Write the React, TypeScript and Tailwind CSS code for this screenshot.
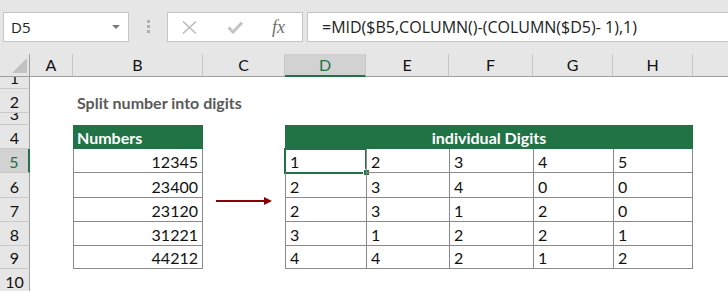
import React from "react";

const nums = ["12345", "23400", "23120", "31221", "44212"];

function FormulaBar() {
  return (
    <div className="h-[54px] bg-[#e6e6e6] pt-[12px] flex overflow-hidden font-['Open_Sans',sans-serif] text-[#222]">
      <div className="shrink-0 ml-[3px] w-[126px] h-[30px] bg-white border border-[#c6c6c6] flex items-center pl-[7px] pr-[8px] text-[15px]">
        <span className="flex-1">D5</span>
        <svg width="8" height="4" viewBox="0 0 8 4">
          <path d="M0 0H8L4 4Z" fill="#7a7a7a" />
        </svg>
      </div>
      <div className="shrink-0 w-[38px] flex flex-col items-center pt-[8px] gap-[2px]">
        <div className="w-[3px] h-[3px] bg-[#b0b0b0]" />
        <div className="w-[3px] h-[3px] bg-[#b0b0b0]" />
        <div className="w-[3px] h-[3px] bg-[#b0b0b0]" />
      </div>
      <div className="shrink-0 w-[136px] h-[30px] bg-white border border-[#c6c6c6] flex items-center">
        <svg className="ml-[14px]" width="15" height="13" viewBox="0 0 15 13">
          <path d="M1 0.5L14 12.5M14 0.5L1 12.5" stroke="#bdbdbd" strokeWidth="1.6" />
        </svg>
        <svg className="ml-[30px]" width="16" height="13" viewBox="0 0 16 13">
          <path d="M1.5 6.5L6 11L15 1.5" stroke="#c4c4c4" strokeWidth="3" fill="none" />
        </svg>
        <span className="ml-[29px] font-['Liberation_Serif',serif] italic text-[18px] text-[#6e6e6e] leading-none">
          fx
        </span>
      </div>
      <div className="shrink-0 ml-[4px] w-[440px] h-[30px] bg-white border border-[#c6c6c6] flex items-center pl-[14px] text-[16px] whitespace-nowrap">
        =MID($B5,COLUMN()-(COLUMN($D5)- 1),1)
      </div>
    </div>
  );
}

function ColHeader({ label, sel, last }: { label: string; sel?: boolean; last?: boolean }) {
  if (sel) {
    return (
      <div className="flex items-center justify-center bg-[#d2d2d2] text-[#217346] border-r border-r-[#c6c6c6] border-b-2 border-b-[#217346] text-[16px]">
        {label}
      </div>
    );
  }
  return (
    <div
      className={
        last
          ? "flex items-center justify-center bg-[#e6e6e6] border-b border-b-[#9e9e9e] text-[16px]"
          : "flex items-center justify-center bg-[#e6e6e6] text-[#111] border-r border-r-[#c6c6c6] border-b border-b-[#9e9e9e] text-[16px]"
      }
    >
      {label}
    </div>
  );
}

function RowHeader({ n, sel }: { n: number; sel?: boolean }) {
  if (sel) {
    return (
      <div className="flex items-end justify-center overflow-hidden bg-[#d2d2d2] text-[#217346] border-r-2 border-r-[#217346] border-b border-b-[#c9c9c9] pb-[2px] text-[16px] leading-[17px]">
        {n}
      </div>
    );
  }
  return (
    <div className="flex items-end justify-center overflow-hidden bg-[#e6e6e6] text-[#111] border-r border-r-[#9e9e9e] border-b border-b-[#c9c9c9] pb-[2px] text-[16px] leading-[17px]">
      {n}
    </div>
  );
}

function Empty() {
  return <div />;
}

function Sheet() {
  const letters = ["A", "B", "C", "D", "E", "F", "G", "H"];
  const rows: React.ReactNode[] = [];

  rows.push(
    <div key="corner" className="relative bg-[#e6e6e6] border-r border-r-[#9e9e9e] border-b border-b-[#9e9e9e]">
      <svg className="absolute left-0 top-0" width="30" height="23" viewBox="0 0 30 23">
        <path d="M27 4L27 19L12 19Z" fill="#c2c2c2" />
      </svg>
    </div>
  );
  letters.forEach((l) => rows.push(<ColHeader key={"h" + l} label={l} sel={l === "D"} />));
  rows.push(<ColHeader key="hlast" label="" last />);

  for (let r = 1; r <= 10; r++) {
    rows.push(<RowHeader key={"r" + r} n={r} sel={r === 5} />);
    if (r === 2) {
      rows.push(<Empty key="2a" />);
      rows.push(
        <div key="2b" className="flex items-end pl-[4px] pb-[2px] whitespace-nowrap overflow-visible font-bold text-[16px] leading-[17px] text-[#595959]">
          Split number into digits
        </div>
      );
      for (let i = 0; i < 7; i++) rows.push(<Empty key={"2e" + i} />);
    } else if (r === 4) {
      rows.push(<Empty key="4a" />);
      rows.push(
        <div key="4b" className="flex items-end pl-[4px] pb-[3px] bg-[#217346] text-white font-bold text-[16px] leading-[17px]">
          Numbers
        </div>
      );
      rows.push(<Empty key="4c" />);
      rows.push(
        <div key="4d" className="col-span-5 flex items-end justify-center pb-[3px] bg-[#217346] text-white font-bold text-[16px] leading-[17px]">
          individual Digits
        </div>
      );
      rows.push(<Empty key="4z" />);
    } else if (r >= 5 && r <= 9) {
      const num = nums[r - 5];
      rows.push(<Empty key={r + "a"} />);
      rows.push(
        <div key={r + "b"} className="flex items-end justify-end pr-[4px] pb-[2px] border-l border-r border-b border-[#8a8a8a] text-[16px] leading-[17px] text-[#111]">
          {num}
        </div>
      );
      rows.push(<Empty key={r + "c"} />);
      num.split("").forEach((d, i) => {
        const isLast = i === 4;
        const isSel = r === 5 && i === 0;
        rows.push(
          <div
            key={r + "d" + i}
            className={
              isLast
                ? "flex items-end pl-[4px] pb-[2px] border-l border-r border-b border-[#8a8a8a] text-[16px] leading-[17px] text-[#111]"
                : "relative flex items-end pl-[4px] pb-[2px] border-l border-b border-[#8a8a8a] text-[16px] leading-[17px] text-[#111]"
            }
          >
            {d}
            {isSel && (
              <>
                <div className="absolute left-[-2px] top-[-1px] w-[83px] h-[26px] border-2 border-[#217346]" />
                <div className="absolute right-[-4px] bottom-[-4px] w-[7px] h-[7px] bg-[#217346] border border-white" />
              </>
            )}
          </div>
        );
      });
      rows.push(<Empty key={r + "z"} />);
    } else {
      for (let i = 0; i < 9; i++) rows.push(<Empty key={r + "e" + i} />);
    }
  }

  return (
    <div className="relative grid grid-cols-[30px_43px_130px_82px_81px_83px_84px_80px_80px_35px] grid-rows-[23px_12px_24px_12px_24px_24px_25px_24px_24px_23px_24px] font-['Lato',sans-serif]">
      {rows}
      <svg className="absolute left-[216px] top-[142px]" width="58" height="10" viewBox="0 0 58 10">
        <path d="M0 5H50" stroke="#8b0000" strokeWidth="2.2" />
        <path d="M48 1L56 5L48 9Z" fill="#8b0000" />
      </svg>
    </div>
  );
}

export default function App() {
  return (
    <div className="w-[728px] h-[291px] overflow-hidden bg-white">
      <FormulaBar />
      <Sheet />
    </div>
  );
}
